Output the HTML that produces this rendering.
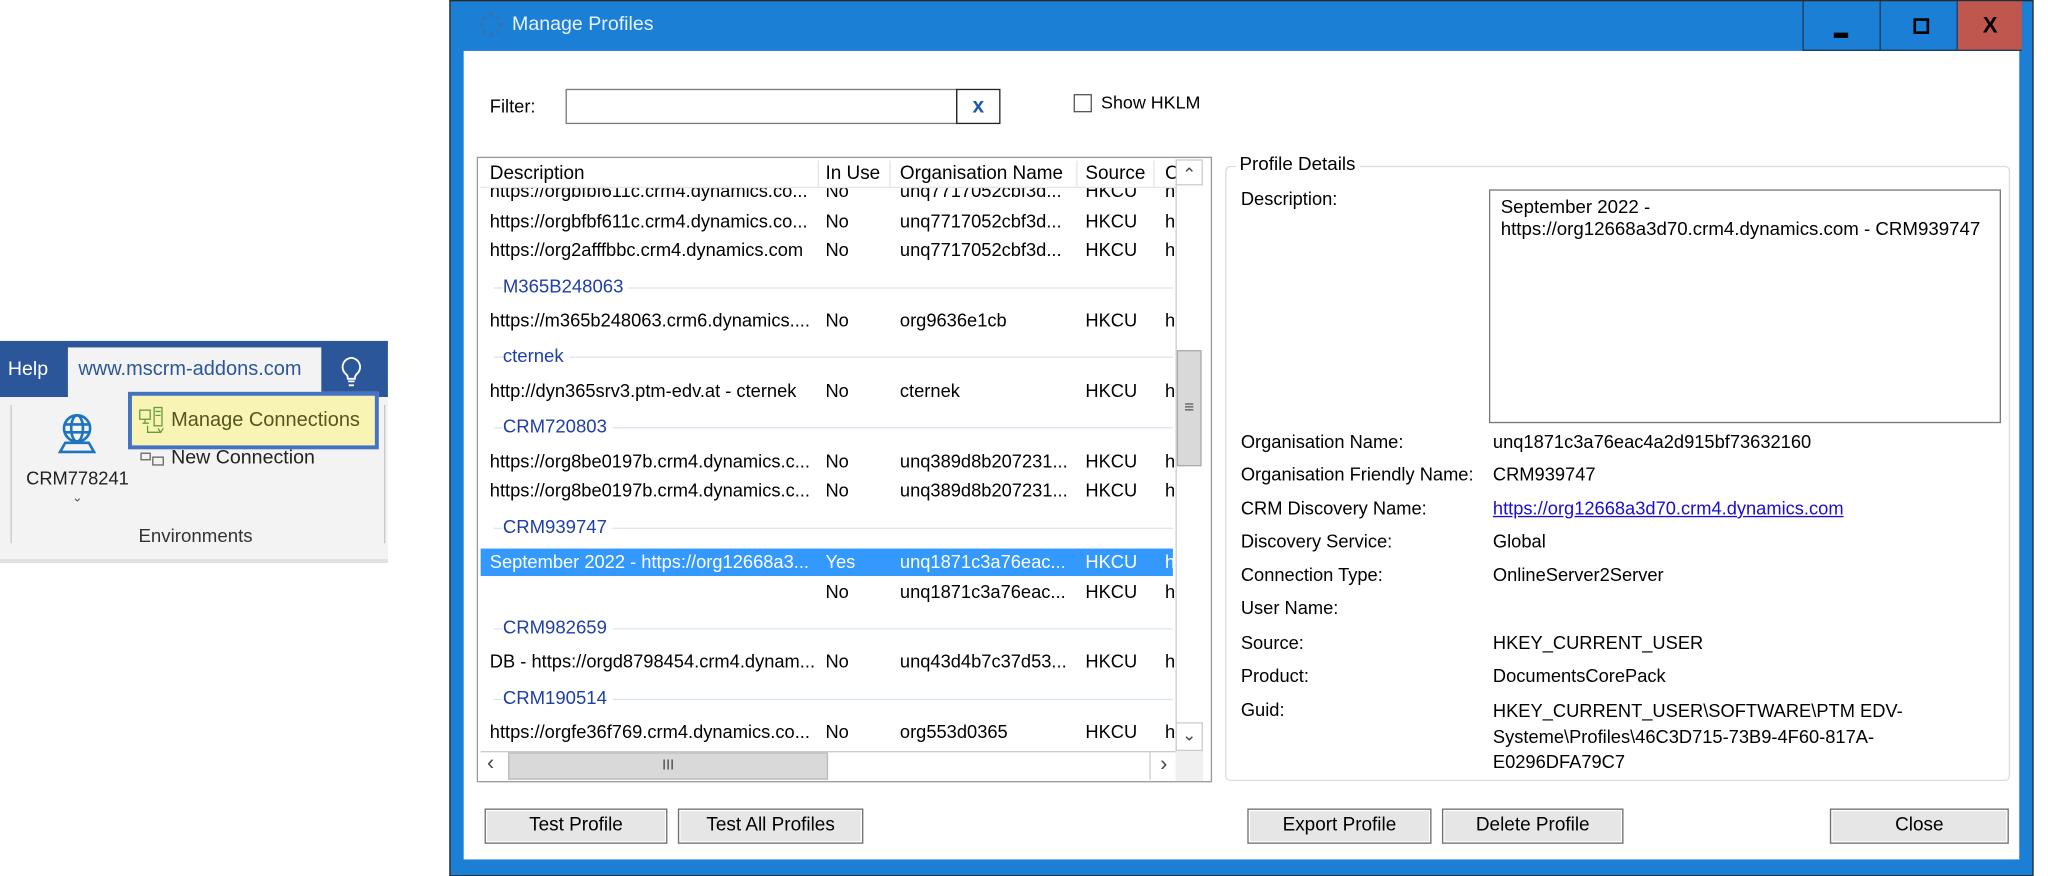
<!DOCTYPE html>
<html><head><meta charset="utf-8"><style>
html,body{margin:0;padding:0;background:#fff;width:2048px;height:876px;overflow:hidden}
#w{position:absolute;left:0;top:0;width:1568px;height:671px;transform:scale(1.30612);transform-origin:0 0;font-family:"Liberation Sans",Arial,sans-serif;font-size:12.5px;color:#000}
.a{position:absolute;white-space:nowrap}
.btn{position:absolute;height:25px;border:1px solid #707070;background:#e6e6e6;box-shadow:inset 0 0 0 1px #fff;text-align:center;line-height:25px;font-size:14.5px}
.row{position:absolute;left:0;height:21px;line-height:21px;width:530px}
.row span{position:absolute;font-size:14px;letter-spacing:0}
.g{position:absolute;left:0;height:20px;width:530px}
.g span{position:absolute;left:17px;color:#1e3ea8;font-size:14.2px;line-height:20px;background:#fff;padding-right:4px}
.g i{position:absolute;left:10px;right:0;top:10px;border-top:1px solid #dbe6f4}
.lb{position:absolute;left:950px;font-size:14px}
.vl{position:absolute;left:1143px;font-size:14px}
</style></head><body><div id="w">
<!-- ribbon -->
<div class="a" style="left:0;top:261px;width:297px;height:43px;background:#2b579a"></div>
<div class="a" style="left:6px;top:274px;color:#fff;font-size:15px">Help</div>
<div class="a" style="left:52px;top:266px;width:194px;height:38px;background:#f3f3f3"></div>
<div class="a" style="left:60px;top:274px;color:#2b579a;font-size:15.3px">www.mscrm-addons.com</div>
<svg class="a" style="left:260px;top:272px" width="18" height="26" viewBox="0 0 18 26"><path d="M9 2a7 7 0 0 0-4 12.5c1 1 1.3 2 1.3 3.5h5.4c0-1.5.3-2.5 1.3-3.5A7 7 0 0 0 9 2zM6.5 20h5M7 23h4" fill="none" stroke="#fff" stroke-width="1.4"/></svg>
<div class="a" style="left:0;top:304px;width:297px;height:124px;background:#f3f3f3"></div>
<div class="a" style="left:8px;top:310px;height:106px;border-left:1px solid #c8c8c8"></div>
<div class="a" style="left:294px;top:310px;height:106px;border-left:1px solid #c8c8c8"></div>
<div class="a" style="left:0;top:428px;width:297px;height:3px;background:#e1e1e1"></div>
<svg class="a" style="left:40px;top:313px" width="38" height="36" viewBox="0 0 38 36"><circle cx="19" cy="15" r="10" fill="none" stroke="#1e73be" stroke-width="2"/><ellipse cx="19" cy="15" rx="4.5" ry="10" fill="none" stroke="#1e73be" stroke-width="2"/><path d="M9 12h20M9 18h20" stroke="#1e73be" stroke-width="2"/><path d="M6 33l4-7h18l4 7z" fill="none" stroke="#1e73be" stroke-width="2"/></svg>
<div class="a" style="left:20px;top:358px;font-size:14px;color:#222">CRM778241</div>
<div class="a" style="left:55px;top:376px;font-size:10px;color:#555">&#8964;</div>
<div class="a" style="left:98px;top:300px;width:186px;height:38px;border:3px solid #4472c4;background:#f8f5b4"></div>
<svg class="a" style="left:106px;top:311px" width="22" height="22" viewBox="0 0 22 22"><rect x="1" y="3" width="8" height="7" fill="none" stroke="#6a9a3a"/><path d="M3 13h5M5 10v3" stroke="#6a9a3a"/><rect x="12" y="1" width="6" height="14" fill="none" stroke="#6a9a3a"/><path d="M13 4h4M13 7h4M7 15v5h10M15 17l2 3 2-3" fill="none" stroke="#6a9a3a"/></svg>
<div class="a" style="left:131px;top:313px;font-size:15.3px;color:#555520">Manage Connections</div>
<svg class="a" style="left:107px;top:345px" width="20" height="14" viewBox="0 0 20 14"><rect x="1" y="2" width="7" height="5" fill="none" stroke="#666"/><rect x="10" y="5" width="8" height="6" fill="none" stroke="#666"/></svg>
<div class="a" style="left:131px;top:342px;font-size:15px;color:#222">New Connection</div>
<div class="a" style="left:106px;top:403px;font-size:14.3px;color:#333">Environments</div>

<!-- window -->
<div class="a" style="left:344px;top:0;width:1213px;height:671px;background:#1c7fd6;border:1px solid #2a2a2a;box-sizing:border-box"></div>
<div class="a" style="left:355px;top:39px;width:1191px;height:619px;background:#fff"></div>
<svg class="a" style="left:366px;top:9px" width="20" height="20" viewBox="0 0 20 20"><g fill="#3a6ea8" opacity=".6"><circle cx="10" cy="2.5" r="2"/><circle cx="10" cy="17.5" r="2"/><circle cx="2.5" cy="10" r="2"/><circle cx="17.5" cy="10" r="2"/><circle cx="4.7" cy="4.7" r="1.6"/><circle cx="15.3" cy="4.7" r="1.6"/><circle cx="4.7" cy="15.3" r="1.6"/><circle cx="15.3" cy="15.3" r="1.6"/></g></svg>
<div class="a" style="left:392px;top:10px;color:#e8f2ff;font-size:15px">Manage Profiles</div>
<div class="a" style="left:1380px;top:1px;width:60px;height:38px;border:1px solid #1a3a5a;border-top:0;box-sizing:border-box"></div>
<div class="a" style="left:1404px;top:25px;width:11px;height:4px;background:#000"></div>
<div class="a" style="left:1440px;top:1px;width:59px;height:38px;border-bottom:1px solid #1a3a5a;border-right:1px solid #1a3a5a;box-sizing:border-box"></div>
<div class="a" style="left:1465px;top:14px;width:8px;height:8px;border:2px solid #000"></div>
<div class="a" style="left:1499px;top:1px;width:49px;height:38px;background:#c0574f;border-bottom:1px solid #1a3a5a;box-sizing:border-box"></div>
<div class="a" style="left:1518px;top:10px;font-size:17px;font-weight:bold">X</div>

<div class="a" style="left:375px;top:73px;font-size:14px">Filter:</div>
<div class="a" style="left:433px;top:68px;width:300px;height:27px;border:1px solid #7a7a7a;box-sizing:border-box"></div>
<div class="a" style="left:732px;top:68px;width:34px;height:27px;border:1px solid #222;box-sizing:border-box;text-align:center;line-height:25px;color:#1e5aa8;font-weight:bold;font-size:16px">x</div>
<div class="a" style="left:822px;top:72px;width:14px;height:14px;border:1px solid #555;box-sizing:border-box"></div>
<div class="a" style="left:843px;top:71px;font-size:13.7px">Show HKLM</div>

<!-- list -->
<div class="a" style="left:365px;top:120px;width:563px;height:479px;border:1px solid #999;box-sizing:border-box;overflow:hidden;background:#fff">
 <div class="a" style="left:2px;top:2px;width:532px;height:20px;background:#fff;border-bottom:1px solid #e5e5e5;z-index:2;font-size:14.5px;line-height:20px">
  <span class="a" style="left:7px">Description</span><span class="a" style="left:258px;top:0;height:20px;border-left:1px solid #e5e5e5"></span>
  <span class="a" style="left:264px">In Use</span><span class="a" style="left:313px;top:0;height:20px;border-left:1px solid #e5e5e5"></span>
  <span class="a" style="left:321px">Organisation Name</span><span class="a" style="left:456px;top:0;height:20px;border-left:1px solid #e5e5e5"></span>
  <span class="a" style="left:463px">Source</span><span class="a" style="left:515px;top:0;height:20px;border-left:1px solid #e5e5e5"></span>
  <span class="a" style="left:524px">C</span>
 </div>
 <div class="a" style="left:2px;top:0;width:532px;height:455px">
  <div class="row" style="top:15px"><span style="left:7px">https://orgbfbf611c.crm4.dynamics.co...</span><span style="left:264px">No</span><span style="left:321px">unq7717052cbf3d...</span><span style="left:463px">HKCU</span><span style="left:524px">h</span></div>
  <div class="row" style="top:38px"><span style="left:7px">https://orgbfbf611c.crm4.dynamics.co...</span><span style="left:264px">No</span><span style="left:321px">unq7717052cbf3d...</span><span style="left:463px">HKCU</span><span style="left:524px">h</span></div>
  <div class="row" style="top:60px"><span style="left:7px">https://org2afffbbc.crm4.dynamics.com</span><span style="left:264px">No</span><span style="left:321px">unq7717052cbf3d...</span><span style="left:463px">HKCU</span><span style="left:524px">h</span></div>
  <div class="g" style="top:89px"><i></i><span>M365B248063</span></div>
  <div class="row" style="top:114px"><span style="left:7px">https://m365b248063.crm6.dynamics....</span><span style="left:264px">No</span><span style="left:321px">org9636e1cb</span><span style="left:463px">HKCU</span><span style="left:524px">h</span></div>
  <div class="g" style="top:142px"><i></i><span>cternek</span></div>
  <div class="row" style="top:168px"><span style="left:7px">http://dyn365srv3.ptm-edv.at - cternek</span><span style="left:264px">No</span><span style="left:321px">cternek</span><span style="left:463px">HKCU</span><span style="left:524px">h</span></div>
  <div class="g" style="top:196px"><i></i><span>CRM720803</span></div>
  <div class="row" style="top:222px"><span style="left:7px">https://org8be0197b.crm4.dynamics.c...</span><span style="left:264px">No</span><span style="left:321px">unq389d8b207231...</span><span style="left:463px">HKCU</span><span style="left:524px">h</span></div>
  <div class="row" style="top:244px"><span style="left:7px">https://org8be0197b.crm4.dynamics.c...</span><span style="left:264px">No</span><span style="left:321px">unq389d8b207231...</span><span style="left:463px">HKCU</span><span style="left:524px">h</span></div>
  <div class="g" style="top:273px"><i></i><span>CRM939747</span></div>
  <div class="row" style="top:299px;background:#3399ff;color:#fff"><span style="left:7px">September 2022 - https://org12668a3...</span><span style="left:264px">Yes</span><span style="left:321px">unq1871c3a76eac...</span><span style="left:463px">HKCU</span><span style="left:524px">h</span></div>
  <div class="row" style="top:322px"><span style="left:264px">No</span><span style="left:321px">unq1871c3a76eac...</span><span style="left:463px">HKCU</span><span style="left:524px">h</span></div>
  <div class="g" style="top:350px"><i></i><span>CRM982659</span></div>
  <div class="row" style="top:375px"><span style="left:7px">DB - https://orgd8798454.crm4.dynam...</span><span style="left:264px">No</span><span style="left:321px">unq43d4b7c37d53...</span><span style="left:463px">HKCU</span><span style="left:524px">h</span></div>
  <div class="g" style="top:404px"><i></i><span>CRM190514</span></div>
  <div class="row" style="top:429px"><span style="left:7px">https://orgfe36f769.crm4.dynamics.co...</span><span style="left:264px">No</span><span style="left:321px">org553d0365</span><span style="left:463px">HKCU</span><span style="left:524px">h</span></div>
 </div>
 <!-- vscroll -->
 <div class="a" style="left:534px;top:1px;width:21px;height:453px;background:#fff;border-left:1px solid #ccc;z-index:3"></div>
 <div class="a" style="left:534px;top:1px;width:21px;height:20px;border:1px solid #ccc;box-sizing:border-box;z-index:4;text-align:center;font-size:13px;line-height:22px;color:#444">&#8963;</div>
 <div class="a" style="left:535px;top:147px;width:19px;height:89px;background:#d9d9d9;border:1px solid #aaa;box-sizing:border-box;z-index:4;text-align:center;line-height:86px;color:#555;font-size:13px">&#8801;</div>
 <div class="a" style="left:534px;top:432px;width:21px;height:22px;border:1px solid #ccc;box-sizing:border-box;z-index:4;text-align:center;font-size:13px;line-height:18px;color:#444">&#8964;</div>
 <!-- hscroll -->
 <div class="a" style="left:2px;top:454px;width:532px;height:22px;background:#fff;border-top:1px solid #ccc;z-index:3"></div>
 <div class="a" style="left:7px;top:455px;font-size:16px;color:#444;z-index:4">&#8249;</div>
 <div class="a" style="left:23px;top:455px;width:245px;height:21px;background:#d9d9d9;border:1px solid #bbb;box-sizing:border-box;z-index:4;text-align:center;line-height:19px;font-size:11px;color:#444">III</div>
 <div class="a" style="left:514px;top:455px;width:20px;height:21px;border-left:1px solid #ccc;z-index:4;text-align:center;font-size:16px;line-height:20px;color:#444">&#8250;</div>
 <div class="a" style="left:534px;top:454px;width:21px;height:23px;background:#f0f0f0;z-index:3"></div>
</div>

<!-- details -->
<div class="a" style="left:938px;top:127px;width:601px;height:471px;border:1px solid #dcdcdc;border-radius:4px;box-sizing:border-box"></div>
<div class="a" style="left:946px;top:118px;background:#fff;padding:0 3px;font-size:14.4px">Profile Details</div>
<div class="lb" style="top:144px">Description:</div>
<div class="a" style="left:1140px;top:145px;width:392px;height:179px;border:1px solid #777;box-sizing:border-box;padding:5px 0 0 8px;font-size:14.3px;line-height:17px">September 2022 -<br>https://org12668a3d70.crm4.dynamics.com - CRM939747</div>
<div class="lb" style="top:330px">Organisation Name:</div><div class="vl" style="top:330px">unq1871c3a76eac4a2d915bf73632160</div>
<div class="lb" style="top:355px">Organisation Friendly Name:</div><div class="vl" style="top:355px">CRM939747</div>
<div class="lb" style="top:381px">CRM Discovery Name:</div><div class="vl" style="top:381px;color:#1a0dcc;text-decoration:underline">https://org12668a3d70.crm4.dynamics.com</div>
<div class="lb" style="top:406px">Discovery Service:</div><div class="vl" style="top:406px">Global</div>
<div class="lb" style="top:432px">Connection Type:</div><div class="vl" style="top:432px">OnlineServer2Server</div>
<div class="lb" style="top:457px">User Name:</div>
<div class="lb" style="top:484px">Source:</div><div class="vl" style="top:484px">HKEY_CURRENT_USER</div>
<div class="lb" style="top:509px">Product:</div><div class="vl" style="top:509px">DocumentsCorePack</div>
<div class="lb" style="top:535px">Guid:</div><div class="vl" style="top:535px;line-height:19.5px">HKEY_CURRENT_USER\SOFTWARE\PTM EDV-<br>Systeme\Profiles\46C3D715-73B9-4F60-817A-<br>E0296DFA79C7</div>

<div class="btn" style="left:371px;top:619px;width:138px">Test Profile</div>
<div class="btn" style="left:519px;top:619px;width:140px">Test All Profiles</div>
<div class="btn" style="left:955px;top:619px;width:139px">Export Profile</div>
<div class="btn" style="left:1104px;top:619px;width:137px">Delete Profile</div>
<div class="btn" style="left:1401px;top:619px;width:135px">Close</div>
</div></body></html>
